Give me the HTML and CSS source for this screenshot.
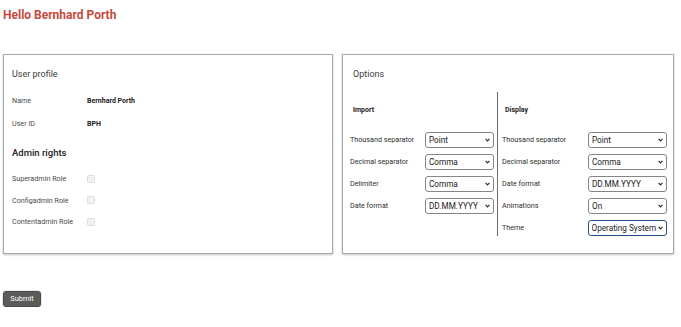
FILE: index.html
```html
<!DOCTYPE html>
<html lang="en">
<head>
<meta charset="utf-8">
<title>Hello Bernhard Porth</title>
<link rel="stylesheet" href="styles.css">
</head>
<body>
<div class="page">
  <h1 class="greeting">Hello Bernhard Porth</h1>
  <div class="cards">
    <section class="card profile">
      <h2 class="card-title">User profile</h2>
      <div class="field first"><span class="field-label">Name</span><span class="field-value">Bernhard Porth</span></div>
      <div class="field"><span class="field-label">User ID</span><span class="field-value">BPH</span></div>
      <h3 class="subhead">Admin rights</h3>
      <div class="role first"><span class="field-label">Superadmin Role</span><span class="check"></span></div>
      <div class="role"><span class="field-label">Configadmin Role</span><span class="check"></span></div>
      <div class="role"><span class="field-label">Contentadmin Role</span><span class="check"></span></div>
    </section>
    <section class="card options">
      <h2 class="card-title opt-title">Options</h2>
      <div class="opt-cols">
        <div class="opt-col import">
          <h4 class="col-head">Import</h4>
          <div class="opt-row"><span class="opt-label">Thousand separator</span><span class="select-wrap"><select class="sel"><option>Point</option></select><svg class="chev" viewBox="0 0 6 4"><polyline points="0.7,0.7 3,3.2 5.3,0.7"/></svg></span></div>
          <div class="opt-row"><span class="opt-label">Decimal separator</span><span class="select-wrap"><select class="sel"><option>Comma</option></select><svg class="chev" viewBox="0 0 6 4"><polyline points="0.7,0.7 3,3.2 5.3,0.7"/></svg></span></div>
          <div class="opt-row"><span class="opt-label">Delimiter</span><span class="select-wrap"><select class="sel"><option>Comma</option></select><svg class="chev" viewBox="0 0 6 4"><polyline points="0.7,0.7 3,3.2 5.3,0.7"/></svg></span></div>
          <div class="opt-row"><span class="opt-label">Date format</span><span class="select-wrap"><select class="sel"><option>DD.MM.YYYY</option></select><svg class="chev" viewBox="0 0 6 4"><polyline points="0.7,0.7 3,3.2 5.3,0.7"/></svg></span></div>
        </div>
        <div class="opt-col display">
          <h4 class="col-head">Display</h4>
          <div class="opt-row"><span class="opt-label">Thousand separator</span><span class="select-wrap"><select class="sel"><option>Point</option></select><svg class="chev" viewBox="0 0 6 4"><polyline points="0.7,0.7 3,3.2 5.3,0.7"/></svg></span></div>
          <div class="opt-row"><span class="opt-label">Decimal separator</span><span class="select-wrap"><select class="sel"><option>Comma</option></select><svg class="chev" viewBox="0 0 6 4"><polyline points="0.7,0.7 3,3.2 5.3,0.7"/></svg></span></div>
          <div class="opt-row"><span class="opt-label">Date format</span><span class="select-wrap"><select class="sel"><option>DD.MM.YYYY</option></select><svg class="chev" viewBox="0 0 6 4"><polyline points="0.7,0.7 3,3.2 5.3,0.7"/></svg></span></div>
          <div class="opt-row"><span class="opt-label">Animations</span><span class="select-wrap"><select class="sel"><option>On</option></select><svg class="chev" viewBox="0 0 6 4"><polyline points="0.7,0.7 3,3.2 5.3,0.7"/></svg></span></div>
          <div class="opt-row"><span class="opt-label">Theme</span><span class="select-wrap"><select class="sel focused"><option>Operating System</option></select><svg class="chev" viewBox="0 0 6 4"><polyline points="0.7,0.7 3,3.2 5.3,0.7"/></svg></span></div>
        </div>
      </div>
    </section>
  </div>
  <button class="submit" type="button">Submit</button>
</div>
</body>
</html>
```
FILE: styles.css
```css
html, body {
  margin: 0;
  padding: 0;
  background: #ffffff;
}
body {
  font-family: Roboto, "Liberation Sans", Arial, sans-serif;
  color: #333;
}
.page {
  padding-left: 3px;
  width: 671px;
}
.greeting {
  margin: 8px 0 0 0;
  font-size: 12px;
  line-height: 14px;
  font-weight: 700;
  color: #c64a3d;
}
.cards {
  display: grid;
  grid-template-columns: 330px 332px;
  column-gap: 9px;
  margin-top: 32px;
}
.card {
  box-sizing: border-box;
  height: 200px;
  border: 1px solid #a8a8a8;
  box-shadow: 0 1px 2px rgba(0, 0, 0, 0.22);
  background: #fff;
}
.profile {
  padding: 14px 8px 0 8px;
}
.card-title {
  margin: 0;
  font-size: 9px;
  line-height: 11px;
  font-weight: 400;
  color: #3c3c3c;
}
.field {
  display: flex;
  align-items: center;
  height: 23px;
}
.field.first {
  margin-top: 9px;
}
.field-label {
  width: 75px;
  flex: none;
  font-size: 7.2px;
  color: #4a4a4a;
}
.field-value {
  font-size: 7px;
  font-weight: 700;
  color: #222;
}
.subhead {
  margin: 12px 0 0 0;
  font-size: 9.5px;
  line-height: 11px;
  font-weight: 500;
  color: #222;
}
.role {
  display: flex;
  align-items: center;
  height: 21.5px;
}
.role.first {
  margin-top: 10px;
}
.check {
  box-sizing: border-box;
  width: 8px;
  height: 8px;
  border: 1px solid #dcdcdc;
  border-radius: 1.5px;
  background: #f1f1f1;
}
.options {
  padding: 14px 0 0 0;
}
.opt-title {
  padding-left: 10px;
}
.opt-cols {
  display: flex;
  margin-top: 12px;
  align-items: flex-start;
}
.opt-col {
  box-sizing: border-box;
  padding-top: 14px;
}
.import {
  width: 154px;
  padding-left: 7px;
  padding-right: 3px;
}
.display {
  flex: 1;
  border-left: 1px solid #6e6e6e;
  padding-left: 4px;
  padding-right: 6px;
}
.col-head {
  margin: 0 0 18px 3px;
  font-size: 7px;
  line-height: 8px;
  font-weight: 700;
  color: #222;
}
.opt-row {
  display: flex;
  align-items: center;
  height: 16px;
  margin-bottom: 6px;
}
.opt-row:last-child {
  margin-bottom: 0;
}
.opt-label {
  flex: none;
  width: 75px;
  font-size: 7.2px;
  line-height: 12px;
  color: #2e2e2e;
  margin-top: -1px;
}
.display .opt-label {
  width: 86px;
}
.select-wrap {
  position: relative;
  display: block;
  width: 69px;
  height: 16px;
  line-height: 0;
}
.display .select-wrap {
  width: 79px;
}
.sel {
  -webkit-appearance: none;
  appearance: none;
  display: block;
  box-sizing: border-box;
  width: 100%;
  height: 16px;
  margin: 0;
  padding: 0 0 0 3px;
  border: 1px solid #858585;
  border-radius: 3px;
  background: #fff;
  font-family: Roboto, "Liberation Sans", Arial, sans-serif;
  font-size: 8.2px;
  line-height: 14px;
  color: #1a1a1a;
  outline: none;
}
.sel.focused {
  border: 1.5px solid #24528e;
  padding-left: 2.5px;
}
.chev {
  position: absolute;
  right: 4px;
  top: 6px;
  width: 5px;
  height: 4px;
  fill: none;
  stroke: #2a2a2a;
  stroke-width: 1.4;
  pointer-events: none;
}
.submit {
  display: block;
  margin-top: 37px;
  box-sizing: border-box;
  width: 38px;
  height: 16px;
  padding: 0;
  border: 1px solid #4a4a4a;
  border-radius: 3px;
  background: #5b5b5b;
  color: #fff;
  font-family: Roboto, "Liberation Sans", Arial, sans-serif;
  font-size: 7.5px;
  font-weight: 400;
  line-height: 14px;
  box-shadow: 0 0 0 1px #e8e8e8;
}
```
